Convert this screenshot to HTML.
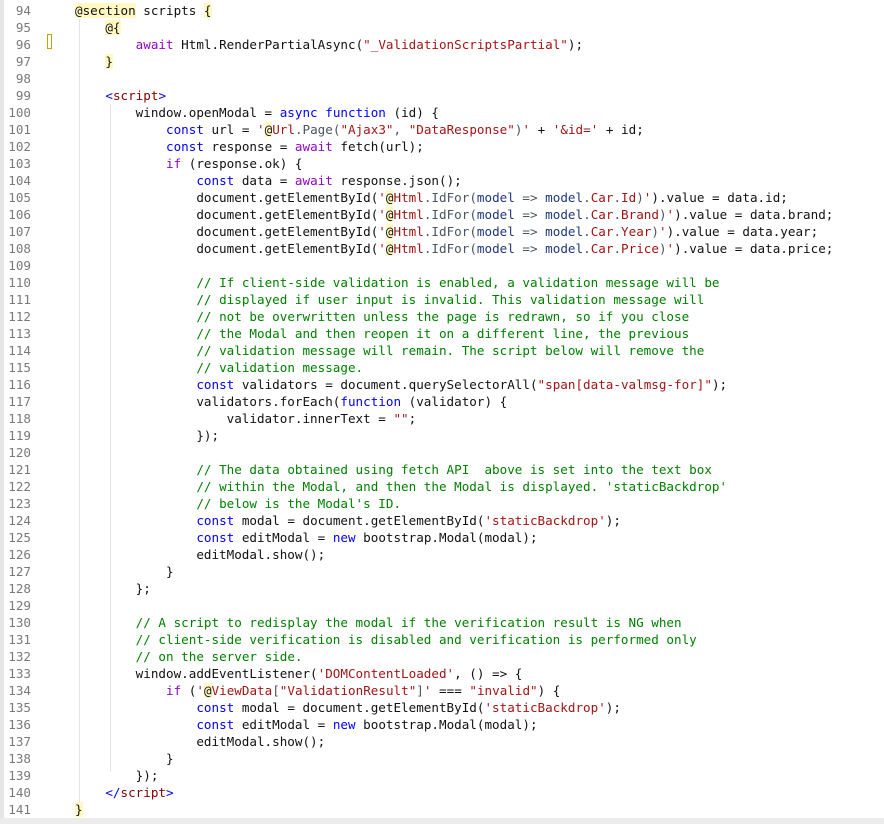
<!DOCTYPE html>
<html><head><meta charset="utf-8"><style>
html,body{margin:0;padding:0;background:#fff;width:884px;height:824px;overflow:hidden}
.lb{position:absolute;left:0;top:0;width:4px;height:824px;background:#e6e6e6}
.bb{position:absolute;left:0;top:818px;width:884px;height:6px;background:#ececec}
.nums{position:absolute;left:4px;top:2px;width:27px;text-align:right;font:12.6px/17px "DejaVu Sans Mono",monospace;color:#7a7a7a;white-space:pre;margin:0}
pre.code{position:absolute;left:75px;top:2px;margin:0;font:12.6px/17px "DejaVu Sans Mono",monospace;color:#111;white-space:pre}
.k{color:#0000ff}.a{color:#8f08c4}.s{color:#a31515}.c{color:#008000}
.r{background:#fff8c0}.g{color:#4a5560}.m{color:#1f377f}.t{color:#800000}.tb{color:#0000ff}
.mk{position:absolute;left:47px;top:34px;width:5px;height:15px;border:1px solid #c8a200;box-sizing:border-box}
.ig{position:absolute;width:1px;background:#e4e4e4}
</style></head><body>
<div class="lb"></div><div class="bb"></div>
<div class="mk"></div>
<div class="ig" style="left:79px;top:19px;height:786px"></div>
<div class="ig" style="left:110px;top:104px;height:668px"></div>
<pre class="nums">94
95
96
97
98
99
100
101
102
103
104
105
106
107
108
109
110
111
112
113
114
115
116
117
118
119
120
121
122
123
124
125
126
127
128
129
130
131
132
133
134
135
136
137
138
139
140
141</pre>
<pre class="code"><span class="r">@</span><span class="r">section</span> scripts <span class="r">{</span>
    <span class="r">@{</span>
        <span class="a">await</span> Html.RenderPartialAsync(<span class="s">"_ValidationScriptsPartial"</span>);
    <span class="r">}</span>

    <span class="tb">&lt;</span><span class="t">script</span><span class="tb">&gt;</span>
        window.openModal = <span class="k">async</span> <span class="k">function</span> (id) {
            <span class="k">const</span> url = <span class="s">'</span><span class="r">@</span><span class="s">Url</span><span class="g">.Page(</span><span class="s">"Ajax3"</span><span class="g">, </span><span class="s">"DataResponse"</span><span class="g">)</span><span class="s">'</span> + <span class="s">'&amp;id='</span> + id;
            <span class="k">const</span> response = <span class="a">await</span> fetch(url);
            <span class="a">if</span> (response.ok) {
                <span class="k">const</span> data = <span class="a">await</span> response.json();
                document.getElementById(<span class="s">'</span><span class="r">@</span><span class="s">Html</span><span class="g">.IdFor(</span><span class="m">model</span><span class="g"> =&gt; </span><span class="m">model</span><span class="g">.</span><span class="s">Car</span><span class="g">.</span><span class="s">Id</span><span class="g">)</span><span class="s">'</span>).value = data.id;
                document.getElementById(<span class="s">'</span><span class="r">@</span><span class="s">Html</span><span class="g">.IdFor(</span><span class="m">model</span><span class="g"> =&gt; </span><span class="m">model</span><span class="g">.</span><span class="s">Car</span><span class="g">.</span><span class="s">Brand</span><span class="g">)</span><span class="s">'</span>).value = data.brand;
                document.getElementById(<span class="s">'</span><span class="r">@</span><span class="s">Html</span><span class="g">.IdFor(</span><span class="m">model</span><span class="g"> =&gt; </span><span class="m">model</span><span class="g">.</span><span class="s">Car</span><span class="g">.</span><span class="s">Year</span><span class="g">)</span><span class="s">'</span>).value = data.year;
                document.getElementById(<span class="s">'</span><span class="r">@</span><span class="s">Html</span><span class="g">.IdFor(</span><span class="m">model</span><span class="g"> =&gt; </span><span class="m">model</span><span class="g">.</span><span class="s">Car</span><span class="g">.</span><span class="s">Price</span><span class="g">)</span><span class="s">'</span>).value = data.price;

                <span class="c">// If client-side validation is enabled, a validation message will be</span>
                <span class="c">// displayed if user input is invalid. This validation message will</span>
                <span class="c">// not be overwritten unless the page is redrawn, so if you close</span>
                <span class="c">// the Modal and then reopen it on a different line, the previous</span>
                <span class="c">// validation message will remain. The script below will remove the</span>
                <span class="c">// validation message.</span>
                <span class="k">const</span> validators = document.querySelectorAll(<span class="s">"span[data-valmsg-for]"</span>);
                validators.forEach(<span class="k">function</span> (validator) {
                    validator.innerText = <span class="s">""</span>;
                });

                <span class="c">// The data obtained using fetch API  above is set into the text box</span>
                <span class="c">// within the Modal, and then the Modal is displayed. 'staticBackdrop'</span>
                <span class="c">// below is the Modal's ID.</span>
                <span class="k">const</span> modal = document.getElementById(<span class="s">'staticBackdrop'</span>);
                <span class="k">const</span> editModal = <span class="k">new</span> bootstrap.Modal(modal);
                editModal.show();
            }
        };

        <span class="c">// A script to redisplay the modal if the verification result is NG when</span>
        <span class="c">// client-side verification is disabled and verification is performed only</span>
        <span class="c">// on the server side.</span>
        window.addEventListener(<span class="s">'DOMContentLoaded'</span>, () =&gt; {
            <span class="a">if</span> (<span class="s">'</span><span class="r">@</span><span class="s">ViewData</span><span class="g">[</span><span class="s">"ValidationResult"</span><span class="g">]</span><span class="s">'</span> === <span class="s">"invalid"</span>) {
                <span class="k">const</span> modal = document.getElementById(<span class="s">'staticBackdrop'</span>);
                <span class="k">const</span> editModal = <span class="k">new</span> bootstrap.Modal(modal);
                editModal.show();
            }
        });
    <span class="tb">&lt;/</span><span class="t">script</span><span class="tb">&gt;</span>
<span class="r">}</span></pre>
</body></html>
